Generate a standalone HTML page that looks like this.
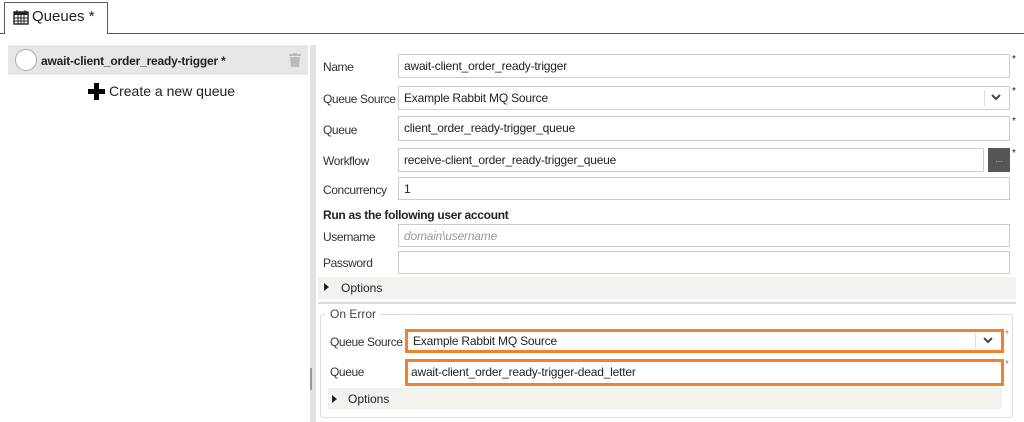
<!DOCTYPE html>
<html><head><style>
*{box-sizing:border-box;margin:0;padding:0}
body{width:1024px;height:422px;background:#fff;font-family:"Liberation Sans",sans-serif;font-size:12px;color:#222;position:relative;overflow:hidden}
.a{position:absolute}
.inp{position:absolute;border:1px solid #ccc;background:#fff;padding-left:5px;line-height:22px;font-size:12px;white-space:nowrap;letter-spacing:-0.2px}
.lbl{position:absolute;font-size:12px;color:#333;letter-spacing:-0.4px}
.star{position:absolute;font-size:10px}
</style></head><body>
<div class="a" style="left:0;top:33px;width:1024px;height:1px;background:#555"></div>
<div class="a" style="left:4px;top:2px;width:104px;height:32px;border:1px solid #555;border-bottom:none;background:#fff"></div>
<svg class="a" style="left:13px;top:9px" width="16" height="16" viewBox="0 0 16 16"><rect x="1" y="3" width="14" height="12" fill="none" stroke="#222" stroke-width="1.4"/><rect x="1" y="3" width="14" height="3" fill="#222"/><path d="M4 1v4M12 1v4M1 9h14M1 12h14M5 6v9M8 6v9M11 6v9" stroke="#222" stroke-width="1"/></svg>
<div class="a" style="left:32px;top:8px;font-size:15px">Queues *</div>

<div class="a" style="left:8px;top:45px;width:300px;height:30px;background:#e6e6e6"></div>
<div class="a" style="left:15px;top:49px;width:22px;height:22px;border-radius:50%;border:1px solid #aaa;background:#fff"></div>
<div class="a" style="left:41px;top:54px;font-weight:bold;font-size:12px;letter-spacing:-0.2px">await-client_order_ready-trigger *</div>
<svg class="a" style="left:289px;top:53px" width="12" height="14" viewBox="0 0 12 14"><rect x="0" y="1" width="12" height="2" fill="#bbb"/><rect x="4" y="0" width="4" height="2" fill="#bbb"/><path d="M1 4h10l-1 10H2z" fill="#bbb"/></svg>
<div class="a" style="left:88px;top:83px;width:17px;height:17px"><div class="a" style="left:6px;top:0;width:5px;height:17px;background:#000"></div><div class="a" style="left:0;top:6px;width:17px;height:5px;background:#000"></div></div>
<div class="a" style="left:109px;top:83px;font-size:14px">Create a new queue</div>

<div class="a" style="left:310px;top:45px;width:6px;height:377px;background:#e2e2e2"></div>
<div class="a" style="left:310px;top:368px;width:2px;height:22px;background:#999"></div>

<div class="lbl" style="left:323px;top:60px">Name</div>
<div class="inp" style="left:398px;top:54px;width:612px;height:24px">await-client_order_ready-trigger</div>
<div class="star" style="left:1012px;top:54px">*</div>
<div class="lbl" style="left:323px;top:92px">Queue Source</div>
<div class="inp" style="left:398px;top:86px;width:612px;height:24px">Example Rabbit MQ Source</div>
<div class="a" style="left:984px;top:90px;width:1px;height:16px;background:#ddd"></div>
<svg class="a" style="left:991px;top:94px" width="10" height="7" viewBox="0 0 10 7"><path d="M1 1l4 4 4-4" fill="none" stroke="#444" stroke-width="2"/></svg>
<div class="star" style="left:1012px;top:86px">*</div>
<div class="lbl" style="left:323px;top:123px">Queue</div>
<div class="inp" style="left:398px;top:116px;width:612px;height:25px">client_order_ready-trigger_queue</div>
<div class="star" style="left:1012px;top:116px">*</div>
<div class="lbl" style="left:323px;top:154px">Workflow</div>
<div class="inp" style="left:398px;top:148px;width:586px;height:24px">receive-client_order_ready-trigger_queue</div>
<div class="a" style="left:988px;top:148px;width:22px;height:24px;background:#555;color:#ddd;font-size:8px;text-align:center;line-height:24px">...</div>
<div class="star" style="left:1012px;top:148px">*</div>
<div class="lbl" style="left:323px;top:183px">Concurrency</div>
<div class="inp" style="left:398px;top:177px;width:612px;height:23px">1</div>
<div class="a" style="left:323px;top:208px;font-weight:bold;letter-spacing:-0.3px">Run as the following user account</div>
<div class="lbl" style="left:323px;top:230px">Username</div>
<div class="inp" style="left:398px;top:224px;width:612px;height:23px;color:#999;font-style:italic">domain\username</div>
<div class="lbl" style="left:323px;top:256px">Password</div>
<div class="inp" style="left:398px;top:251px;width:612px;height:23px"></div>
<div class="a" style="left:318px;top:277px;width:698px;height:22px;background:#f2f2ef"></div>
<div class="a" style="left:324px;top:283px;width:0;height:0;border-left:5px solid #222;border-top:4px solid transparent;border-bottom:4px solid transparent"></div>
<div class="a" style="left:341px;top:281px">Options</div>
<div class="a" style="left:318px;top:302px;width:698px;height:2px;background:#ddd"></div>

<div class="a" style="left:320px;top:314px;width:693px;height:104px;border:1px solid #ddd;border-radius:3px"></div>
<div class="a" style="left:326px;top:307px;background:#fff;padding:0 4px;color:#444">On Error</div>
<div class="lbl" style="left:330px;top:335px">Queue Source</div>
<div class="inp" style="left:405px;top:329px;width:599px;height:24px;border:3px solid #f4812a;line-height:18px">Example Rabbit MQ Source</div>
<div class="a" style="left:975px;top:333px;width:1px;height:16px;background:#ddd"></div>
<svg class="a" style="left:983px;top:337px" width="10" height="7" viewBox="0 0 10 7"><path d="M1 1l4 4 4-4" fill="none" stroke="#444" stroke-width="2"/></svg>
<div class="star" style="left:1005px;top:329px;color:#888">*</div>
<div class="lbl" style="left:330px;top:365px">Queue</div>
<div class="inp" style="left:405px;top:359px;width:599px;height:27px;border:3px solid #f4812a;line-height:21px;padding-left:3px">await-client_order_ready-trigger-dead_letter</div>
<div class="star" style="left:1005px;top:359px;color:#888">*</div>
<div class="a" style="left:328px;top:388px;width:674px;height:21px;background:#f2f2ef"></div>
<div class="a" style="left:332px;top:395px;width:0;height:0;border-left:5px solid #222;border-top:4px solid transparent;border-bottom:4px solid transparent"></div>
<div class="a" style="left:348px;top:392px">Options</div>
</body></html>
